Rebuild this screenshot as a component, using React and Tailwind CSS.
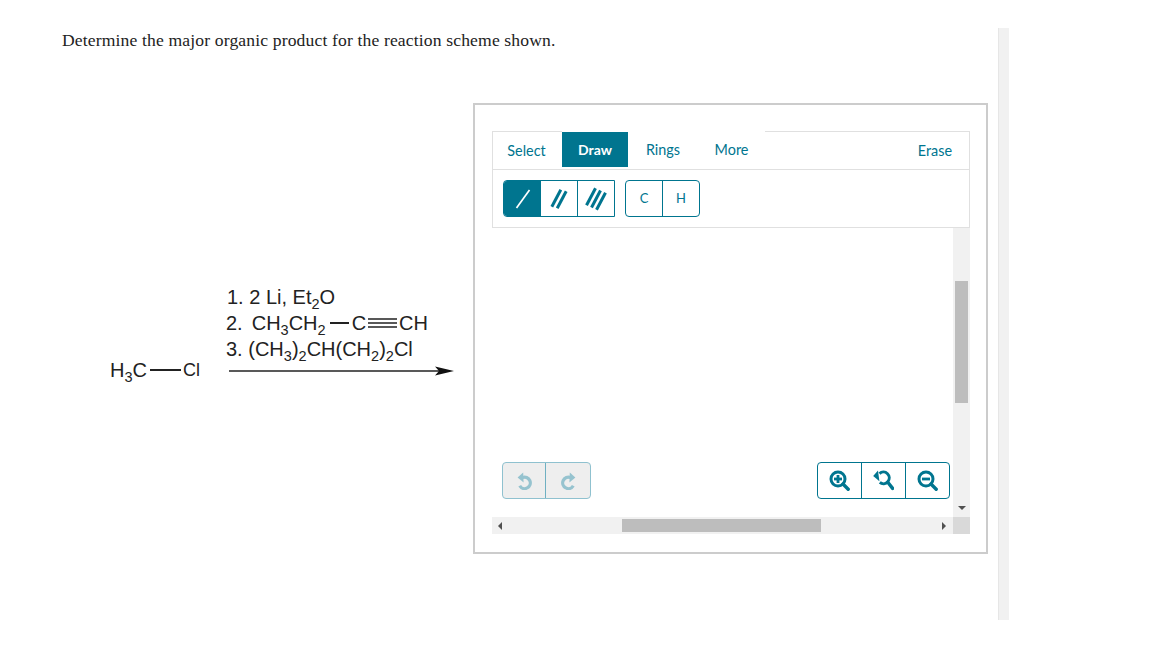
import React from "react";

const teal = "#00758f";
const faded = "#96c3cf";

function Sub({ children }) {
  return <sub className="bottom-[-5px] text-[14.5px]">{children}</sub>;
}

function Bond({ n, color }) {
  const offs = n === 1 ? [[0, 0]] : n === 2 ? [[-2.7, -0.8], [2.7, 0.8]] : [[-5, -2.2], [0, 0], [5, 2.2]];
  return (
    <svg width="26" height="26" viewBox="0 0 26 26">
      {offs.map(([dx, dy]) => (
        <line key={dx} x1={n === 1 ? 6.5 : 8.5 + dx} y1={n === 1 ? 22 : 21.5 + dy} x2={n === 1 ? 19.5 : 17.5 + dx} y2={n === 1 ? 4 : 4.5 + dy} stroke={color} strokeWidth={n === 1 ? 1.7 : 3} />
      ))}
    </svg>
  );
}

function Undo({ flip }) {
  return (
    <svg width="17" height="18" viewBox="0 0 17 18" fill="none" style={flip ? { transform: "scaleX(-1)" } : undefined}>
      <path d="M6.5 5.6 A5.7 5.7 0 1 1 3.7 13.8" stroke={faded} strokeWidth="3.2" />
      <path d="M1.6 5.4 L7.2 0.4 L7.6 10.4 Z" fill={faded} />
    </svg>
  );
}

function Mag({ sign }) {
  return (
    <svg width="21" height="21" viewBox="0 0 21 21" fill="none">
      <circle cx="9" cy="9" r="7" stroke={teal} strokeWidth="3" />
      <line x1="14" y1="14" x2="19.2" y2="19.2" stroke={teal} strokeWidth="3.4" strokeLinecap="round" />
      <line x1="5" y1="9" x2="13" y2="9" stroke={teal} strokeWidth="2.8" />
      {sign === "plus" ? <line x1="9" y1="5" x2="9" y2="13" stroke={teal} strokeWidth="2.8" /> : null}
    </svg>
  );
}

function ZoomReset() {
  return (
    <svg width="21" height="21" viewBox="0 0 21 21" fill="none">
      <path d="M6.5 3.6 A5.8 5.8 0 1 1 6.8 12.4" stroke={teal} strokeWidth="3" />
      <path d="M0.2 6 L5 0.6 L6.4 11.2 Z" fill={teal} />
      <line x1="15" y1="12.5" x2="19.6" y2="18.4" stroke={teal} strokeWidth="3.4" strokeLinecap="round" />
    </svg>
  );
}

export default function App() {
  return (
    <div className="flex h-[648px] w-[1152px] overflow-hidden bg-white pt-[28px]">
      <div className="flex w-[998px] flex-col pl-[62px]">
        <p className="h-[75px] pt-[2px] text-[17.6px] leading-[20px] tracking-[0.14px] text-[#222]" style={{ fontFamily: "'Liberation Serif', serif" }}>
          Determine the major organic product for the reaction scheme shown.
        </p>
        <div className="flex">
          <div className="flex w-[411px] items-start pl-[48px] pt-[181px] text-[20px] text-[#222]" style={{ fontFamily: "'Liberation Sans', sans-serif" }}>
            <div className="mt-[73px] flex h-[26px] w-[91px] items-center whitespace-nowrap">
              <span>H<Sub>3</Sub>C</span>
              <span className="ml-[3px] mr-[2px] h-[1.5px] w-[31px] shrink-0 bg-[#222]" />
              <span className="text-[18px]">Cl</span>
            </div>
            <div className="ml-[26px] flex flex-col leading-[26px]">
              <div className="h-[26px] whitespace-nowrap">1. 2 Li, Et<Sub>2</Sub>O</div>
              <div className="-ml-[1px] flex h-[26px] items-center whitespace-nowrap">
                <span>2.<span className="ml-[9px]">CH<Sub>3</Sub>CH<Sub>2</Sub></span></span>
                <span className="ml-[4px] mr-[3px] h-[1.5px] w-[19px] bg-[#222]" />
                <span>C</span>
                <svg width="31" height="12" viewBox="0 0 31 12" className="mx-[1px]">
                  <path d="M1 2H30M1 6H30M1 10H30" stroke="#222" strokeWidth="1.4" />
                </svg>
                <span>CH</span>
              </div>
              <div className="-ml-[1px] h-[26px] whitespace-nowrap">3. (CH<Sub>3</Sub>)<Sub>2</Sub>CH(CH<Sub>2</Sub>)<Sub>2</Sub>Cl</div>
              <svg width="228" height="12" viewBox="0 0 228 12" className="mt-[3px]">
                <line x1="2" y1="6" x2="212" y2="6" stroke="#222" strokeWidth="1.6" />
                <path d="M208 1.5 L227 6 L208 10.5 L212 6 Z" fill="#111" />
              </svg>
            </div>
          </div>

          <div className="flex h-[451px] w-[515px] flex-col border-2 border-[#ccc] pl-[17px] pr-[16px] pt-[26px]">
            <div className="flex h-[97px] flex-col border-x border-b border-[#e0e0e0]" style={{ fontFamily: "Lato, sans-serif" }}>
              <div className="flex h-[38px] items-start text-[14.4px] text-[#00758f]">
                <div className="flex h-[38px] w-[69px] items-center justify-center border-t border-[#e0e0e0] pr-[2px] pt-[1px]">Select</div>
                <div className="mt-[1px] flex h-[35px] w-[66px] items-center justify-center bg-[#00758f] text-[14px] font-bold text-white">Draw</div>
                <div className="flex h-[38px] w-[70px] items-center justify-center">Rings</div>
                <div className="flex h-[38px] w-[67px] items-center justify-center">More</div>
                <div className="flex h-[38px] flex-1 items-center justify-end border-t border-[#e0e0e0] pr-[17px]">Erase</div>
              </div>
              <div className="flex flex-1 gap-[10px] border-t border-[#e0e0e0] pl-[10px] pt-[10px]">
                <div className="flex h-[37px] w-[112px] overflow-hidden rounded-l-[4px] border border-[#00758f]">
                  <div className="flex w-[37px] items-center justify-center bg-[#00758f]"><Bond n={1} color="#fff" /></div>
                  <div className="flex w-[37px] items-center justify-center border-r border-[#00758f]"><Bond n={2} color={teal} /></div>
                  <div className="flex flex-1 items-center justify-center"><Bond n={3} color={teal} /></div>
                </div>
                <div className="flex h-[37px] w-[75px] rounded-[4px] border border-[#00758f] text-[13px] text-[#00758f]">
                  <div className="flex w-[37px] items-center justify-center border-r border-[#00758f]">C</div>
                  <div className="flex flex-1 items-center justify-center">H</div>
                </div>
              </div>
            </div>

            <div className="flex h-[289px]">
              <div className="flex flex-1 items-end justify-between pb-[18px] pl-[10px] pr-[3px]">
                <div className="flex h-[37px] w-[89px] rounded-[4px] border border-[#8fc1cf] bg-[#eeeeee]">
                  <div className="flex w-[43px] items-center justify-center border-r border-[#6fb0c2]"><Undo /></div>
                  <div className="flex flex-1 items-center justify-center"><Undo flip /></div>
                </div>
                <div className="flex h-[37px] w-[133px] rounded-[4px] border border-[#00758f]">
                  <div className="flex w-[44px] items-center justify-center border-r border-[#00758f]"><Mag sign="plus" /></div>
                  <div className="flex w-[44px] items-center justify-center border-r border-[#00758f]"><ZoomReset /></div>
                  <div className="flex flex-1 items-center justify-center"><Mag sign="minus" /></div>
                </div>
              </div>
              <div className="flex w-[17px] flex-col items-center bg-[#f1f1f1]">
                <div className="mt-[53px] h-[122px] w-[13px] bg-[#bdbdbd]" />
                <svg width="8" height="4" viewBox="0 0 8 4" className="mt-[103px]"><path d="M0 0H8L4 4Z" fill="#505050" /></svg>
              </div>
            </div>

            <div className="flex h-[17px]">
              <div className="flex flex-1 items-center bg-[#f1f1f1]">
                <svg width="4" height="8" viewBox="0 0 4 8" className="ml-[6px]"><path d="M4 0V8L0 4Z" fill="#505050" /></svg>
                <div className="ml-[120px] h-[13px] w-[199px] bg-[#bdbdbd]" />
                <svg width="4" height="8" viewBox="0 0 4 8" className="ml-[121px]"><path d="M0 0V8L4 4Z" fill="#505050" /></svg>
              </div>
              <div className="w-[17px] bg-[#d9d9d9]" />
            </div>
          </div>
        </div>
      </div>
      <div className="h-[592px] w-[11px] border-l border-[#e6e6e6] bg-[#f1f1f1]" />
    </div>
  );
}
